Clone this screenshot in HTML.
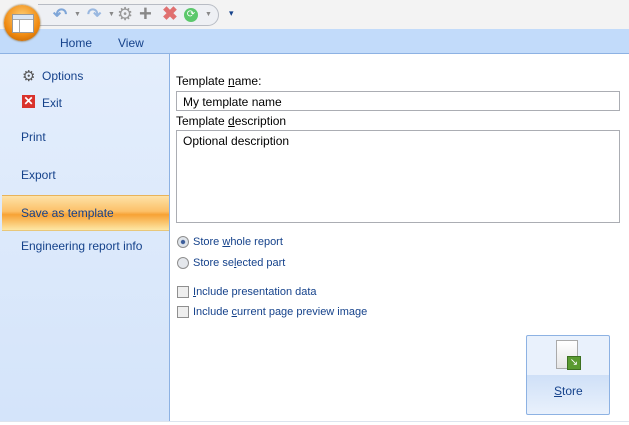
<!DOCTYPE html><html><head><style>
body{margin:0;width:629px;height:425px;overflow:hidden;background:#fff;font-family:"Liberation Sans",sans-serif;font-size:12px;position:relative}
.a{position:absolute}
.m{color:#15428b;font-size:12px;position:absolute;left:21px}
.s{font-size:11px}
u{text-decoration:underline}
</style></head><body>
<div class="a" style="left:0;top:0;width:629px;height:29px;background:#f3f3f3"></div>
<div class="a" style="left:0;top:29px;width:629px;height:24px;background:#c2dbfa;border-bottom:1px solid #8db2e3"></div>
<div class="a" style="left:38px;top:4px;width:180px;height:20px;border:1px solid #b8bcc4;border-left:none;border-radius:0 11px 11px 0;background:#eef0f4"></div>
<div class="a" style="left:4px;top:5px;width:36px;height:36px;border-radius:50%;background:radial-gradient(circle at 50% 35%,#ffd27a,#f08a10 60%,#b45a00);box-shadow:0 0 2px #805000"></div>
<div class="a" style="left:12px;top:14px;width:20px;height:17px;background:#fff;border:1px solid #999"><div style="height:4px;background:#dbe6f4;border-bottom:1px solid #aaa"></div><div style="position:absolute;left:6px;top:5px;width:1px;height:12px;background:#aaa"></div></div>
<div class="a" style="left:53px;top:5px;color:#7fa6d8;font-size:17px;font-weight:bold">↶</div>
<div class="a" style="left:74px;top:11px;color:#888;font-size:7px">▼</div>
<div class="a" style="left:87px;top:5px;color:#9ab8e0;font-size:17px;font-weight:bold">↷</div>
<div class="a" style="left:108px;top:11px;color:#888;font-size:7px">▼</div>
<div class="a" style="left:117px;top:4px;color:#999;font-size:18px">⚙</div>
<div class="a" style="left:139px;top:1px;color:#888;font-size:22px;font-weight:bold">+</div>
<div class="a" style="left:162px;top:3px;color:#e07070;font-size:19px;font-weight:bold">✖</div>
<div class="a" style="left:184px;top:8px;width:14px;height:14px;border-radius:50%;background:#5cc86c;color:#fff;font-size:10px;text-align:center;line-height:14px">⟳</div>
<div class="a" style="left:205px;top:11px;color:#888;font-size:7px">▼</div>
<div class="a" style="left:229px;top:8px;color:#15428b;font-size:9px">▾</div>
<div class="a" style="left:60px;top:36px;color:#15428b">Home</div>
<div class="a" style="left:118px;top:36px;color:#15428b">View</div>
<div class="a" style="left:0;top:54px;width:169px;height:368px;background:linear-gradient(#e4eefc,#d4e4fa);border-right:1px solid #8db2e3"></div>
<div class="a" style="left:22px;top:67px;color:#555;font-size:15px">⚙</div>
<div class="m" style="left:42px;top:69px">Options</div>
<div class="a" style="left:22px;top:95px;width:13px;height:13px;background:#d9322c;color:#fff;font-size:12px;line-height:13px;text-align:center;font-weight:bold">✕</div>
<div class="m" style="left:42px;top:96px">Exit</div>
<div class="m" style="top:130px">Print</div>
<div class="m" style="top:168px">Export</div>
<div class="a" style="left:2px;top:195px;width:167px;height:34px;background:linear-gradient(#fde2a8,#fcc068 45%,#f7a235 55%,#fde7a6);border-top:1px solid #e8b35a;border-bottom:1px solid #e8c77a"></div>
<div class="m" style="top:206px">Save as template</div>
<div class="m" style="top:239px">Engineering report info</div>
<div class="a" style="left:176px;top:74px">Template <u>n</u>ame:</div>
<div class="a" style="left:176px;top:91px;width:442px;height:18px;border:1px solid #abadb3"></div>
<div class="a" style="left:183px;top:95px">My template name</div>
<div class="a" style="left:176px;top:114px">Template <u>d</u>escription</div>
<div class="a" style="left:176px;top:130px;width:442px;height:91px;border:1px solid #abadb3"></div>
<div class="a" style="left:183px;top:134px">Optional description</div>
<div class="a" style="left:177px;top:236px;width:10px;height:10px;border-radius:50%;border:1px solid #8f8f8f;background:radial-gradient(#3c5d9a 25%,#dfe4ea 35%)"></div>
<div class="a s" style="left:193px;top:236px;color:#15428b">Store <u>w</u>hole report</div>
<div class="a" style="left:177px;top:257px;width:10px;height:10px;border-radius:50%;border:1px solid #8f8f8f;background:#e4e7ec"></div>
<div class="a s" style="left:193px;top:257px;color:#15428b">Store se<u>l</u>ected part</div>
<div class="a" style="left:177px;top:286px;width:10px;height:10px;border:1px solid #8f8f8f;background:#eee"></div>
<div class="a s" style="left:193px;top:286px;color:#15428b"><u>I</u>nclude presentation data</div>
<div class="a" style="left:177px;top:306px;width:10px;height:10px;border:1px solid #8f8f8f;background:#eee"></div>
<div class="a s" style="left:193px;top:306px;color:#15428b">Include <u>c</u>urrent page preview image</div>
<div class="a" style="left:526px;top:335px;width:82px;height:78px;border:1px solid #8db2e3;border-radius:2px;background:linear-gradient(#e9f1fc 0 50%,#cfe0f7 50%,#e9f1fc)"></div>
<div class="a" style="left:556px;top:340px;width:20px;height:27px;background:linear-gradient(#fff,#e6e6e6);border:1px solid #aaa"></div>
<div class="a" style="left:567px;top:356px;width:12px;height:12px;background:#5a9a30;border:1px solid #3d7020;color:#fff;font-size:10px;line-height:12px;text-align:center">↘</div>
<div class="a" style="left:554px;top:384px;color:#15428b"><u>S</u>tore</div>
<div class="a" style="left:0;top:421px;width:629px;height:1px;background:#dde4ee"></div>
</body></html>
